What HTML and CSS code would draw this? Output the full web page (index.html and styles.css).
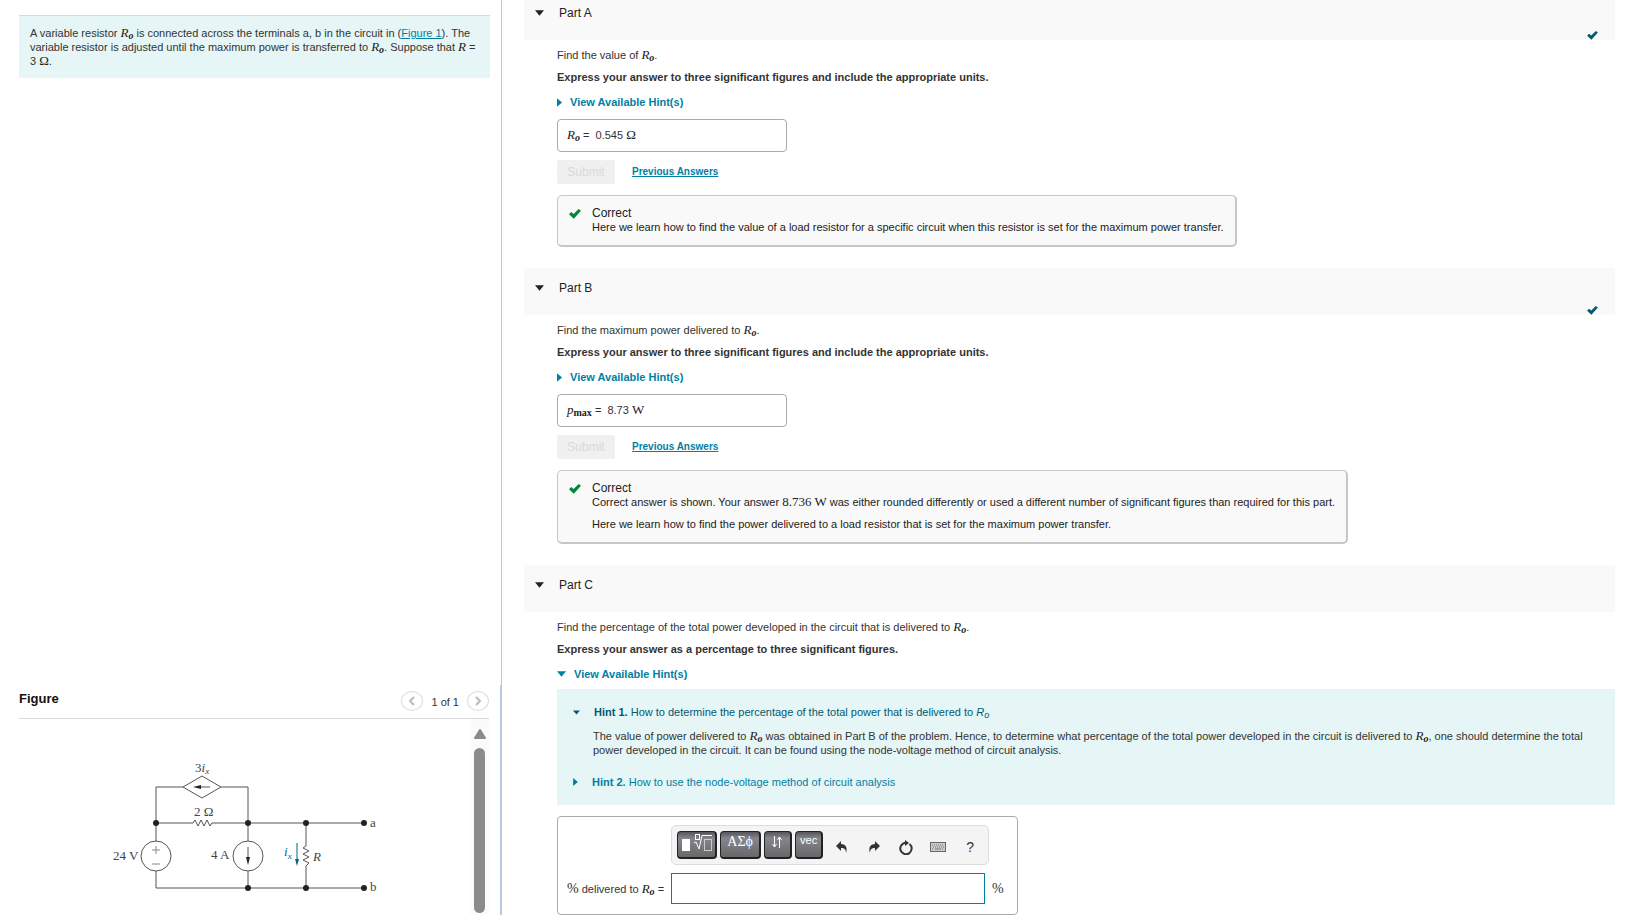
FILE: index.html
```html
<!DOCTYPE html>
<html lang="en">
<head>
  <meta charset="UTF-8" />
  <meta name="viewport" content="width=device-width, initial-scale=1.0"/>
  <title>Maximum Power Transfer</title>
  <link rel="stylesheet" href="styles.css">
</head>
<body>
<svg class="sprite" aria-hidden="true">
  <symbol id="tick" viewBox="0 0 12 10"><path d="M0 5.2 L2.2 3 L4.6 5 L9.7 0 L12 1.8 L4.8 9.8 Z"/></symbol>
  <symbol id="down" viewBox="0 0 10 6"><path d="M0 0 H10 L5 6 Z"/></symbol>
  <symbol id="right" viewBox="0 0 6 10"><path d="M0 0 L6 5 L0 10 Z"/></symbol>
</svg>

<div class="app">
  <aside class="left">
    <div class="problem">
      <p>A variable resistor <span class="math">R<sub>o</sub></span> is connected across the terminals a, b in the circuit in (<a href="#figure">Figure 1</a>). The variable resistor is adjusted until the maximum power is transferred to <span class="math">R<sub>o</sub></span>. Suppose that <span class="math">R</span> = 3&nbsp;<span class="unit">Ω</span>.</p>
    </div>

    <section class="figure" id="figure">
      <div class="figure-head">
        <h2>Figure</h2>
        <div class="pager">
          <button aria-label="Previous figure"><svg width="6" height="10" viewBox="0 0 6 10"><path d="M5 1 L1 5 L5 9"/></svg></button>
          <span>1 of 1</span>
          <button aria-label="Next figure"><svg width="6" height="10" viewBox="0 0 6 10"><path d="M1 1 L5 5 L1 9"/></svg></button>
        </div>
      </div>
      <div class="figure-body">
        <div class="figure-view">
          <svg class="circuit" width="268" height="134" viewBox="0 0 268 134">
            <!-- wires -->
            <g class="wire">
              <path d="M72 27 H45 V81 M110 27 H137 V81 M45 111 V128 H253 M137 111 V128"/>
              <path d="M45 63 H82 L84 60 L87 66 L90 60 L93 66 L96 60 L99 66 L101 63 H253"/>
              <path d="M195 63 V86 L192 88 L198 91 L192 94 L198 97 L192 100 L198 103 L195 106 V128"/>
              <path d="M72 27 L91 16 L110 27 L91 38 Z"/>
              <circle cx="45" cy="96" r="15"/>
              <circle cx="137" cy="96" r="15"/>
              <path d="M99 27 H88 M137 87 V98"/>
            </g>
            <path class="sign" d="M41 90 H49 M45 86 V94 M41 104 H49"/>
            <g class="dot">
              <circle cx="45" cy="63" r="3"/>
              <circle cx="137" cy="63" r="3"/>
              <circle cx="195" cy="63" r="3"/>
              <circle cx="253" cy="63" r="3"/>
              <circle cx="137" cy="128" r="3"/>
              <circle cx="195" cy="128" r="3"/>
              <circle cx="253" cy="128" r="3"/>
              <path d="M82 27 L90 25 V29 Z M137 105 L135 97 H139 Z"/>
            </g>
            <path class="current" d="M186 83 V100"/>
            <path class="current-head" d="M186 106 L184 99 H188 Z"/>
            <text x="84" y="12">3<tspan class="it">i</tspan><tspan class="it small" dy="2">x</tspan></text>
            <text x="83" y="56">2 Ω</text>
            <text x="2" y="100">24 V</text>
            <text x="100" y="99">4 A</text>
            <text class="it blue" x="173" y="96">i<tspan class="small" dy="3">x</tspan></text>
            <text class="it" x="202" y="101">R</text>
            <text x="259" y="67">a</text>
            <text x="259" y="131">b</text>
          </svg>
        </div>
        <div class="scroll" aria-hidden="true">
          <svg width="12" height="10" viewBox="0 0 12 10"><path d="M6 1 L11 9 H1 Z"/></svg>
          <div class="thumb"></div>
        </div>
      </div>
    </section>
  </aside>

  <main class="right">
    <section class="part">
      <header class="part-head">
        <button class="part-toggle"><svg width="9" height="6"><use href="#down"/></svg>Part A</button>
        <svg class="part-done" width="11" height="9"><use href="#tick"/></svg>
      </header>
      <div class="part-body">
        <p>Find the value of <span class="math">R<sub>o</sub></span>.</p>
        <p class="express">Express your answer to three significant figures and include the appropriate units.</p>
        <button class="hints-toggle"><svg width="5" height="9"><use href="#right"/></svg>View Available Hint(s)</button>
        <div class="answer"><span class="math">R<sub>o</sub></span> = &nbsp;0.545 <span class="unit">Ω</span></div>
        <div class="actions">
          <button class="submit" disabled>Submit</button>
          <a href="#previous-a">Previous Answers</a>
        </div>
        <div class="feedback">
          <svg width="12" height="10"><use href="#tick"/></svg>
          <div>
            <h3>Correct</h3>
            <p>Here we learn how to find the value of a load resistor for a specific circuit when this resistor is set for the maximum power transfer.</p>
          </div>
        </div>
      </div>
    </section>

    <section class="part">
      <header class="part-head">
        <button class="part-toggle"><svg width="9" height="6"><use href="#down"/></svg>Part B</button>
        <svg class="part-done" width="11" height="9"><use href="#tick"/></svg>
      </header>
      <div class="part-body">
        <p>Find the maximum power delivered to <span class="math">R<sub>o</sub></span>.</p>
        <p class="express">Express your answer to three significant figures and include the appropriate units.</p>
        <button class="hints-toggle"><svg width="5" height="9"><use href="#right"/></svg>View Available Hint(s)</button>
        <div class="answer"><span class="math">p<sub class="word">max</sub></span> = &nbsp;8.73 <span class="unit">W</span></div>
        <div class="actions">
          <button class="submit" disabled>Submit</button>
          <a href="#previous-b">Previous Answers</a>
        </div>
        <div class="feedback">
          <svg width="12" height="10"><use href="#tick"/></svg>
          <div>
            <h3>Correct</h3>
            <p>Correct answer is shown. Your answer <span class="unit">8.736 W</span> was either rounded differently or used a different number of significant figures than required for this part.</p>
            <p>Here we learn how to find the power delivered to a load resistor that is set for the maximum power transfer.</p>
          </div>
        </div>
      </div>
    </section>

    <section class="part">
      <header class="part-head">
        <button class="part-toggle"><svg width="9" height="6"><use href="#down"/></svg>Part C</button>
      </header>
      <div class="part-body">
        <p>Find the percentage of the total power developed in the circuit that is delivered to <span class="math">R<sub>o</sub></span>.</p>
        <p class="express">Express your answer as a percentage to three significant figures.</p>
        <button class="hints-toggle open"><svg width="9" height="6"><use href="#down"/></svg>View Available Hint(s)</button>
        <div class="hints">
          <button class="hint open"><svg width="7" height="5"><use href="#down"/></svg><span><b>Hint 1.</b> How to determine the percentage of the total power that is delivered to <i>R<sub>o</sub></i></span></button>
          <p>The value of power delivered to <span class="math">R<sub>o</sub></span> was obtained in Part B of the problem. Hence, to determine what percentage of the total power developed in the circuit is delivered to <span class="math">R<sub>o</sub></span>, one should determine the total power developed in the circuit. It can be found using the node-voltage method of circuit analysis.</p>
          <button class="hint"><svg width="5" height="8"><use href="#right"/></svg><span><b>Hint 2.</b> How to use the node-voltage method of circuit analysis</span></button>
        </div>

        <div class="entry">
          <div class="toolbar">
            <button class="key" aria-label="Templates">
              <svg width="30" height="19" viewBox="0 0 30 19">
                <rect class="fill" x="0" y="6" width="8" height="12"/>
                <path d="M12 10 L14 9 L17 16 L20 2.5 H30"/>
                <rect x="13.5" y="1.5" width="4" height="5"/>
                <rect class="slot" x="22.5" y="6.5" width="7" height="11"/>
              </svg>
            </button>
            <button class="key greek">ΑΣϕ</button>
            <button class="key" aria-label="Arrows">
              <svg width="11" height="14" viewBox="0 0 11 14"><path d="M2.5 1 V12 M0.5 9 L2.5 12 L4.5 9 M7.5 13 V2 M5.5 5 L7.5 2 L9.5 5"/></svg>
            </button>
            <button class="key vec">vec</button>
            <div class="tools">
              <button aria-label="Undo"><svg width="12" height="12" viewBox="0 0 12 12"><path d="M0 5 L5 0 V3 C9 3 12 6 10 12 C10 8 8 7 5 7 V10 Z"/></svg></button>
              <button aria-label="Redo"><svg width="12" height="12" viewBox="0 0 12 12"><path d="M12 5 L7 0 V3 C3 3 0 6 2 12 C2 8 4 7 7 7 V10 Z"/></svg></button>
              <button aria-label="Reset"><svg width="14" height="15" viewBox="0 0 14 15"><path class="ring" d="M10.5 4 A5.7 5.7 0 1 1 6.5 2.8"/><path d="M6 0 L10 3 L6 6 Z"/></svg></button>
              <button aria-label="Keyboard">
                <svg width="16" height="10" viewBox="0 0 16 10">
                  <rect class="board" x="0.5" y="0.5" width="15" height="9"/>
                  <path class="rows" d="M2 3 H14 M3 5 H14 M2 7 H4 M12 7 H14"/>
                  <path class="space" d="M5 7 H11"/>
                </svg>
              </button>
              <button class="help">?</button>
            </div>
          </div>
          <label for="percent"><span class="percent">%</span> delivered to <span class="math">R<sub>o</sub></span> =</label>
          <input type="text" id="percent">
          <span class="percent">%</span>
        </div>
      </div>
    </section>
  </main>
</div>
</body>
</html>
```
FILE: styles.css
```css
:root {
  --text: #333;
  --dark: #222;
  --link: #007fa3;
  --teal: #005a70;
  --tint: #e6f6f6;
  --gray: #f9f9f9;
  --line: #d9d9d9;
  --divider: #b9c9de;
}

* {
  box-sizing: border-box;
}

body {
  margin: 0;
  font-family: "Liberation Sans", Arial, sans-serif;
  font-size: 11px;
  line-height: 14px;
  color: var(--text);
  background: #fff;
}

h2, h3, p {
  margin: 0;
}

button {
  padding: 0;
  border: none;
  background: none;
  font: inherit;
  color: inherit;
  cursor: pointer;
}

a {
  color: var(--link);
}

svg {
  fill: currentColor;
  flex: none;
}

sub {
  font-size: 9px;
  line-height: 0;
  vertical-align: -2px;
}

.sprite {
  display: none;
}

.math, .unit {
  font-family: "Liberation Serif", serif;
  font-size: 13px;
  line-height: 0;
  color: var(--dark);
}

.math {
  font-style: italic;
}

.math sub {
  font-size: 10px;
  font-weight: bold;
}

.math .word {
  font-style: normal;
}

.app {
  display: grid;
  grid-template-columns: 502px minmax(0, 1fr);
  height: 100vh;
}

/* problem and figure */
.left {
  display: flex;
  flex-direction: column;
  justify-content: space-between;
  border-right: 1px solid var(--divider);
  overflow: hidden;
}

.problem {
  margin: 15px 11px 0 19px;
  padding: 10px 8px 10px 11px;
  border-top: 1px solid var(--line);
  background: var(--tint);
}

.figure {
  border-right: 1px solid var(--divider);
  padding: 0 11px 0 19px;
}

.figure-head {
  display: flex;
  justify-content: space-between;
  height: 34px;
  padding-top: 6px;
  border-bottom: 1px solid var(--line);
}

.figure-head h2 {
  padding-top: 1px;
  font-size: 13px;
  color: #111;
}

.pager {
  display: flex;
  align-items: center;
  gap: 8px;
  height: 20px;
}

.pager span {
  padding-top: 2px;
}

.pager button {
  display: flex;
  align-items: center;
  justify-content: center;
  width: 22px;
  height: 20px;
  border: 1px solid #ddd;
  border-radius: 50%;
}

.pager path {
  fill: none;
  stroke: #bbb;
  stroke-width: 2;
}

.figure-body {
  display: flex;
  height: 196px;
}

.figure-view {
  flex: 1;
  padding-top: 41px;
  text-align: center;
}

.circuit text {
  font-family: "Liberation Serif", serif;
  font-size: 13px;
  fill: #444;
}

.circuit .it {
  font-style: italic;
}

.circuit .small {
  font-size: 9px;
}

.circuit .blue {
  fill: #00658c;
}

.wire {
  fill: none;
  stroke: #555;
}

.sign {
  stroke: #888;
}

.dot {
  fill: #222;
}

.current {
  stroke: #00658c;
}

.current-head {
  fill: #00658c;
}

.scroll {
  display: flex;
  flex-direction: column;
  align-items: center;
  gap: 9px;
  width: 19px;
  padding: 10px 0 2px;
  background: #fbfbfb;
  color: #8b8b8b;
}

.scroll path {
  stroke: currentColor;
  stroke-width: 2;
  stroke-linejoin: round;
}

.thumb {
  flex: 1;
  width: 11px;
  border-radius: 6px;
  background: #8b8b8b;
}

/* parts */
.right {
  padding: 0 11px 0 22px;
  overflow-y: auto;
  scrollbar-width: none;
}

.part + .part {
  margin-top: 21px;
}

.part:first-child {
  margin-top: -7px;
}

.part-head {
  display: flex;
  justify-content: space-between;
  height: 47px;
  padding: 13px 17px 0 11px;
  background: var(--gray);
  color: var(--dark);
}

.part-toggle {
  display: flex;
  align-items: center;
  gap: 15px;
  height: 14px;
  font-size: 12px;
}

.part-done {
  align-self: flex-end;
  color: var(--teal);
}

.part-body {
  padding: 8px 0 0 33px;
}

.express {
  margin: 8px 0 11px;
  font-weight: bold;
}

.hints-toggle {
  display: flex;
  align-items: center;
  gap: 8px;
  font-weight: bold;
  color: var(--link);
}

.answer {
  width: 230px;
  height: 33px;
  margin-top: 10px;
  padding: 0 9px;
  border: 1px solid #aaa;
  border-radius: 4px;
  line-height: 30px;
}

.actions {
  display: flex;
  align-items: center;
  gap: 17px;
  margin: 8px 0 11px;
}

.actions a {
  font-size: 10px;
  font-weight: bold;
}

.submit {
  width: 58px;
  height: 24px;
  border-radius: 2px;
  background: #f0f0f0;
  color: #d9d9d9;
  font-size: 12px;
}

.feedback {
  display: flex;
  gap: 11px;
  width: fit-content;
  padding: 10px 11px 11px;
  border: 1px solid #c6c6c6;
  border-width: 1px 2px 2px 1px;
  border-radius: 5px;
  background: var(--gray);
  color: var(--dark);
}

.feedback svg {
  margin-top: 3px;
  color: #00863d;
}

.feedback h3 {
  font-size: 12px;
  font-weight: normal;
}

.feedback p + p {
  margin-top: 8px;
}

.hints {
  margin: 8px 0 11px;
  padding: 16px 30px 16px 16px;
  background: var(--tint);
}

.hints p {
  margin: 10px 0 18px;
  padding-left: 20px;
}

.hint {
  display: flex;
  align-items: center;
  gap: 14px;
  color: var(--link);
}

.hint.open {
  color: var(--teal);
}

/* answer entry */
.entry {
  display: grid;
  grid-template-columns: auto 314px auto;
  align-items: center;
  gap: 8px 7px;
  width: fit-content;
  padding: 8px 13px 10px 9px;
  border: 1px solid #aaa;
  border-radius: 4px;
}

.toolbar {
  grid-column: 2 / 4;
  justify-self: start;
  display: flex;
  gap: 3px;
  height: 40px;
  padding: 5px 2px 5px 5px;
  border: 1px solid #ddd;
  border-radius: 5px;
  background: #f4f4f4;
}

.key {
  display: flex;
  justify-content: center;
  width: 28px;
  height: 28px;
  padding-top: 3px;
  border: 1px solid #222;
  border-width: 1px 2px 2px 1px;
  border-radius: 4px;
  background: linear-gradient(#55555a, #85858c 25%, #68686a);
  color: #fff;
}

.key:first-child {
  width: 40px;
  padding-top: 1px;
}

.key svg {
  fill: none;
  stroke: #fff;
}

.key .fill {
  fill: #fff;
  stroke: none;
}

.key .slot {
  stroke: #ccc;
}

.key.greek {
  width: 41px;
  font-family: "Liberation Serif", serif;
  font-size: 14px;
}

.key.vec {
  padding-top: 1px;
}

.tools {
  display: flex;
}

.tools button {
  display: flex;
  align-items: center;
  justify-content: center;
  width: 32px;
  height: 32px;
}

.ring {
  fill: none;
  stroke: currentColor;
  stroke-width: 2;
}

.board {
  fill: #ccc;
  stroke: #666;
}

.rows {
  stroke: #777;
  stroke-dasharray: 1 1;
}

.space {
  stroke: #777;
}

.tools .help {
  font-size: 14px;
}

.entry input {
  width: 100%;
  height: 31px;
  border: 1px solid var(--link);
  font: inherit;
}

.percent {
  font-family: "Liberation Serif", serif;
  font-size: 14px;
  line-height: 0;
}
```
